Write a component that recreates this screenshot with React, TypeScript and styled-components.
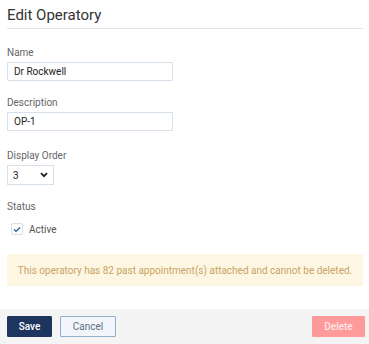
import React from 'react';
import styled, {createGlobalStyle} from 'styled-components';

const GlobalStyles = createGlobalStyle`
  html, body {
    margin: 0;
    padding: 0;
    background: #fff;
    font-family: Roboto, "Liberation Sans", sans-serif;
  }
  * { box-sizing: border-box; }
`

const Page = styled.div`
  width: 369px;
  height: 344px;
  display: flex;
  flex-direction: column;
`

const Body = styled.section`
  flex: 1;
  padding: 0 6px 0 7px;
`

const Title = styled.h1`
  margin: 0;
  padding: 6px 0 4px;
  font-size: 15px;
  font-weight: 400;
  color: #333;
  border-bottom: 1px solid #e4e4e4;
`

const Field = styled.div<{ mt: number }>`
  margin-top: ${({mt}) => mt}px;
  display: flex;
  flex-direction: column;
  align-items: flex-start;
`

const Label = styled.label`
  font-size: 10px;
  color: #666;
  margin-bottom: 4px;
`

const TextInput = styled.input`
  width: 166px;
  height: 19px;
  padding: 0 6px;
  font-family: inherit;
  font-size: 10px;
  color: #222;
  border: 1px solid #d6e0ea;
  border-radius: 1px;
  outline: none;
`

const Select = styled.div`
  width: 47px;
  height: 20px;
  padding: 0 5px;
  display: flex;
  align-items: center;
  justify-content: space-between;
  font-size: 10px;
  color: #222;
  border: 1px solid #d6e0ea;
`

const CheckRow = styled.div`
  display: flex;
  align-items: center;
  gap: 6px;
  padding: 7px 0 0 4px;
  font-size: 10px;
  color: #555;
`

const CheckBox = styled.span`
  width: 12px;
  height: 12px;
  border: 1px solid #d6e0ea;
  border-radius: 2px;
  display: flex;
  align-items: center;
  justify-content: center;
`

const Warning = styled.div`
  margin-top: 19px;
  height: 32px;
  display: flex;
  align-items: center;
  justify-content: center;
  background: #fdf6e2;
  color: #c9a465;
  font-size: 10px;
`

const Footer = styled.footer`
  height: 35px;
  padding: 7px 4px 0 7px;
  background: #f4f4f4;
  display: flex;
  align-items: flex-start;
  gap: 8px;
`

const Button = styled.button<{ variant: 'primary' | 'outline' | 'danger' }>`
  height: 21px;
  padding: 0;
  font-family: inherit;
  font-size: 10px;
  border-radius: 1px;
  cursor: pointer;
  background: ${({variant}) => variant === 'primary' ? '#1e3560' : variant === 'danger' ? '#ff9a9a' : '#f2f6fb'};
  color: ${({variant}) => variant === 'primary' ? '#fff' : variant === 'danger' ? '#ffe6e6' : '#5b7080'};
  border: 1px solid ${({variant}) => variant === 'primary' ? '#1e3560' : variant === 'danger' ? '#ff9a9a' : '#8fb0c8'};
  font-weight: ${({variant}) => variant === 'outline' ? 400 : 500};
`

const Spacer = styled.div`
  flex: 1;
`

function App() {
  return (
    <Page>
      <GlobalStyles/>
      <Body>
        <Title>Edit Operatory</Title>
        <Field mt={18}>
          <Label>Name</Label>
          <TextInput defaultValue="Dr Rockwell"/>
        </Field>
        <Field mt={16}>
          <Label>Description</Label>
          <TextInput defaultValue="OP-1"/>
        </Field>
        <Field mt={19}>
          <Label>Display Order</Label>
          <Select>
            <span>3</span>
            <svg width="8" height="6" viewBox="0 0 8 6">
              <path d="M1 1.2 L4 4.2 L7 1.2" fill="none" stroke="#222" strokeWidth="1.8"/>
            </svg>
          </Select>
        </Field>
        <Field mt={16}>
          <Label>Status</Label>
          <CheckRow>
            <CheckBox>
              <svg width="8" height="7" viewBox="0 0 8 7">
                <path d="M1 3.6 L3 5.4 L7 1.4" fill="none" stroke="#2a5d9a" strokeWidth="1.4"/>
              </svg>
            </CheckBox>
            Active
          </CheckRow>
        </Field>
        <Warning>This operatory has 82 past appointment(s) attached and cannot be deleted.</Warning>
      </Body>
      <Footer>
        <Button variant="primary" style={{width: 45}}>Save</Button>
        <Button variant="outline" style={{width: 56}}>Cancel</Button>
        <Spacer/>
        <Button variant="danger" style={{width: 53}}>Delete</Button>
      </Footer>
    </Page>
  );
}

export default App;
